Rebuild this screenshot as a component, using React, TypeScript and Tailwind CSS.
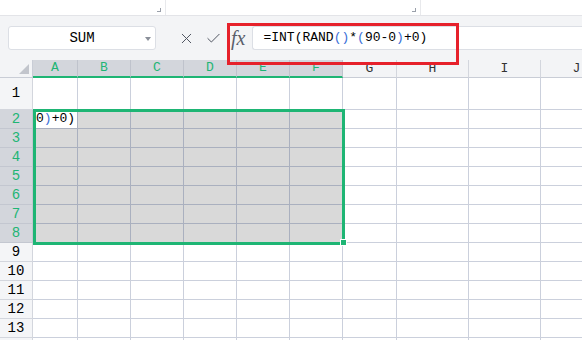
import { X, Check } from "lucide-react";

const cols = [
  { l: "A", w: 45 },
  { l: "B", w: 53 },
  { l: "C", w: 53 },
  { l: "D", w: 53 },
  { l: "E", w: 53 },
  { l: "F", w: 53 },
  { l: "G", w: 54 },
  { l: "H", w: 72 },
  { l: "I", w: 72 },
  { l: "J", w: 72 },
];

const rows = [1, 2, 3, 4, 5, 6, 7, 8, 9, 10, 11, 12, 13, 14];

const mono = { fontFamily: '"Liberation Mono", "DejaVu Sans Mono", monospace' };

function Cell({ row, col, w }: { row: number; col: number; w: number }) {
  const sel = row >= 2 && row <= 8 && col <= 5;
  const active = row === 2 && col === 0;
  return (
    <div
      className={
        "shrink-0 border-r border-b " +
        (active
          ? "bg-white border-[#aab0bf]"
          : sel
            ? "bg-[#d9d9d9] border-[#aab0bf]"
            : "bg-white border-[#cbd0dc]")
      }
      style={{ width: w }}
    >
      {active && (
        <span className="block pl-[3px] pt-[1px] text-[13px] leading-[16px] text-black">
          0<span className="text-[#3a6fd8]">)</span>+0)
        </span>
      )}
    </div>
  );
}

export default function App() {
  return (
    <div
      className="relative w-[582px] h-[340px] overflow-hidden bg-white text-[#333]"
      style={mono}
    >
      {/* top strip */}
      <div className="flex h-[16px] border-b border-[#e3e4e8] bg-white shadow-[0_1px_2px_rgba(0,0,0,0.05)]">
        <div className="relative w-[166px] border-r border-[#e8e9ec]">
          <div className="absolute left-[157px] top-[8px] w-[4px] h-[4px] border-r border-b border-[#9aa0aa]" />
        </div>
        <div className="relative w-[255px] border-r border-[#e8e9ec]">
          <div className="absolute left-[246px] top-[8px] w-[4px] h-[4px] border-r border-b border-[#9aa0aa]" />
        </div>
        <div className="flex-1" />
      </div>

      {/* formula toolbar */}
      <div className="flex items-center h-[44px] bg-[#f3f4f6]">
        <div className="ml-[8px] w-[148px] h-[24px] bg-white border border-[#dcdfe5] rounded-[3px] relative flex items-center justify-center">
          <span className="text-[14px] text-black">SUM</span>
          <div className="absolute right-[4px] top-[10px] w-0 h-0 border-l-[3px] border-r-[3px] border-t-[4px] border-l-transparent border-r-transparent border-t-[#8a8f99]" />
        </div>
        <div className="ml-[22px] flex items-center gap-[10px] text-[#4f5460]">
          <X size={17} strokeWidth={1.4} />
          <Check size={17} strokeWidth={1.4} />
        </div>
        <span
          className="ml-[9px] text-[20px] italic text-[#5a5f6b]"
          style={{ fontFamily: '"Liberation Serif", "DejaVu Serif", serif' }}
        >
          fx
        </span>
        <div className="ml-[7px] flex-1 h-[24px] bg-white border border-r-0 border-[#dcdfe5] rounded-l-[3px] flex items-center pl-[10px]">
          <span className="text-[13px] text-black whitespace-pre">
            =INT(RAND<span className="text-[#3a6fd8]">()</span>*<span className="text-[#3a6fd8]">(</span>90-0<span className="text-[#3a6fd8]">)</span>+0)
          </span>
        </div>
      </div>

      {/* sheet */}
      <div className="relative">
        {/* column headers */}
        <div className="flex h-[18px]">
          <div className="relative shrink-0 w-[33px] bg-[#f3f4f6] border-r border-b border-[#c9cdd6]">
            <div className="absolute right-[3px] bottom-[3px] w-0 h-0 border-l-[10px] border-t-[10px] border-l-transparent border-t-transparent border-b-0 border-r-0 [border-bottom:10px_solid_#c2c5cc]" />
          </div>
          {cols.map((c, i) => (
            <div
              key={c.l}
              className={
                "shrink-0 flex items-center justify-center border-r text-[13px] " +
                (i <= 5
                  ? "bg-[#d3d6dc] border-[#bfc3cc] border-b-2 border-b-[#1eb574] text-[#1eb574]"
                  : "bg-[#f3f4f6] border-[#d3d6dd] border-b border-b-[#c9cdd6] text-[#333]")
              }
              style={{ width: c.w }}
            >
              {c.l}
            </div>
          ))}
        </div>

        {rows.map((r) => {
          const sel = r >= 2 && r <= 8;
          return (
            <div key={r} className={"flex " + (r === 1 ? "h-[32px]" : "h-[19px]")}>
              <div
                className={
                  "shrink-0 w-[33px] flex items-center justify-center border-r border-b text-[14px] " +
                  (sel
                    ? "bg-[#d3d6dc] border-[#c3c7d0] text-[#1eb574]"
                    : "bg-[#f4f5f7] border-[#d3d6dd] text-black")
                }
              >
                {r < 14 ? r : ""}
              </div>
              {cols.map((c, i) => (
                <Cell key={c.l} row={r} col={i} w={c.w} />
              ))}
            </div>
          );
        })}

        {/* selection border */}
        <div className="absolute left-[33px] top-[49px] w-[312px] h-[136px] border-[3px] border-[#1eb574] pointer-events-none" />
        <div className="absolute left-[340px] top-[179px] w-[7px] h-[7px] bg-[#1eb574] border border-white" />
      </div>

      {/* red highlight */}
      <div className="absolute left-[227px] top-[23px] w-[232px] h-[42px] border-[3px] border-[#e6212b] pointer-events-none" />
    </div>
  );
}
